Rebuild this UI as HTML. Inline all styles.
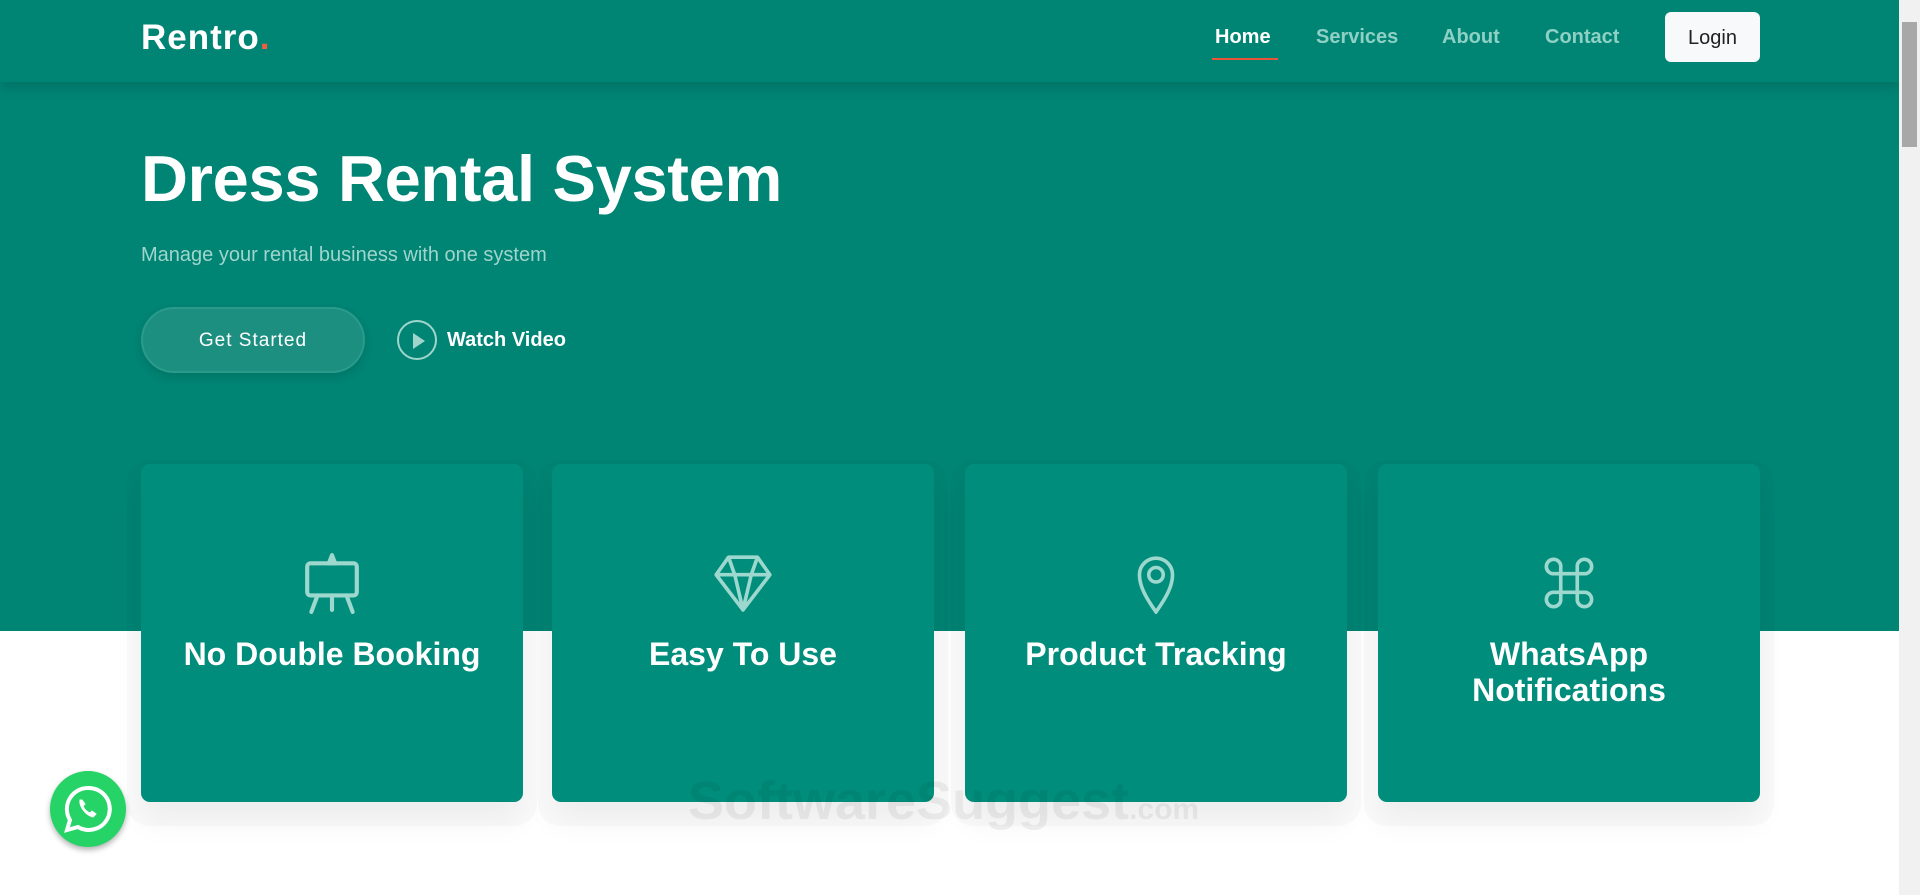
<!DOCTYPE html>
<html><head><meta charset="utf-8"><style>
*{margin:0;padding:0;box-sizing:border-box}
body{width:1920px;height:895px;overflow:hidden;background:#fff;font-family:"Liberation Sans",sans-serif;position:relative}
.hero{position:absolute;left:0;top:0;width:1899px;height:631px;background:#008575}
.nav{position:absolute;left:0;top:0;width:1899px;height:82px;background:#008575;box-shadow:0 6px 12px rgba(0,60,50,.25)}
.logo{position:absolute;left:141px;top:18px;font-size:35px;font-weight:bold;color:#fff;letter-spacing:1px}
.logo span{color:#f0603e}
.nl{position:absolute;top:26px;font-size:20px;font-weight:bold;color:#8fd0c5}
.login{position:absolute;left:1665px;top:12px;width:95px;height:50px;background:#f8f9fb;border-radius:6px;color:#222;font-size:20px;text-align:center;line-height:52px}
h1{position:absolute;left:141px;top:141px;font-size:65px;color:#fff;font-weight:bold;letter-spacing:-.3px}
.sub{position:absolute;left:141px;top:244px;font-size:20px;color:#9fd5cc}
.btn{position:absolute;left:141px;top:307px;width:224px;height:66px;border-radius:33px;background:#1d8f80;border:2px solid #2a9a8b;color:#fff;font-size:19px;letter-spacing:1px;text-align:center;line-height:64px;box-shadow:0 4px 10px rgba(0,50,40,.2)}
.play{position:absolute;left:397px;top:320px;width:40px;height:40px;border:2px solid #9fd5cc;border-radius:50%}
.play:after{content:"";position:absolute;left:14px;top:11px;border-left:12px solid #9fd5cc;border-top:8px solid transparent;border-bottom:8px solid transparent}
.wv{position:absolute;left:447px;top:329px;font-size:20px;font-weight:bold;color:#fff}
.card{position:absolute;top:464px;width:382px;height:338px;background:#018d7b;border-radius:9px;box-shadow:0 20px 30px rgba(0,0,0,.05),0 10px 0 14px rgba(0,0,0,.02);text-align:center;color:#fff}
.card svg{position:absolute;left:50%;top:88px;margin-left:-30px}
.card h3{position:absolute;left:0;right:0;top:172px;font-size:32px;line-height:36px;font-weight:bold}
.wa{position:absolute;left:50px;top:771px;width:76px;height:76px;border-radius:50%;background:#25d366;box-shadow:0 3px 6px rgba(0,0,0,.3)}
.wm{position:absolute;left:688px;top:770px;font-size:54px;font-weight:bold;color:rgba(0,0,0,.06)}
.sb{position:absolute;right:0;top:0;width:21px;height:895px;background:#f1f1f1}
.sb div{position:absolute;left:3px;top:22px;width:15px;height:125px;background:#a8a8a8}
</style></head><body>
<div class="hero"></div>
<div class="nav">
<div class="logo">Rentro<span>.</span></div>
<div class="nl" style="left:1215px;color:#fff">Home</div>
<div style="position:absolute;left:1212px;top:58px;width:66px;height:2px;background:#e8553a"></div>
<div class="nl" style="left:1316px">Services</div>
<div class="nl" style="left:1442px">About</div>
<div class="nl" style="left:1545px">Contact</div>
<div class="login">Login</div>
</div>
<h1>Dress Rental System</h1>
<div class="sub">Manage your rental business with one system</div>
<div class="btn">Get Started</div>
<div class="play"></div>
<div class="wv">Watch Video</div>

<div class="card" style="left:141px"><svg width="60" height="62" viewBox="0 0 58 60" fill="none" stroke="#9dd8cf" stroke-width="4" stroke-linecap="round" stroke-linejoin="round"><rect x="5" y="11" width="48" height="31" rx="3"/><path d="M29 3l-3 8h6z" fill="#9dd8cf"/><path d="M15 42l-6 16M29 42v14M43 42l6 16"/></svg><h3>No Double Booking</h3></div>
<div class="card" style="left:552px"><svg width="60" height="62" viewBox="0 0 58 60" fill="none" stroke="#9dd8cf" stroke-width="3.5" stroke-linejoin="round"><path d="M15 5h28l12 17-26 34L3 22z"/><path d="M3 22h52M15 5l6 17 8 34 8-34 6-17"/></svg><h3>Easy To Use</h3></div>
<div class="card" style="left:965px"><svg width="60" height="62" viewBox="0 0 58 60" fill="none" stroke="#9dd8cf" stroke-width="3.5"><path d="M29 58C19 44 13 33 13 22a16 16 0 0 1 32 0c0 11-6 22-16 36z"/><circle cx="29" cy="22" r="7"/></svg><h3>Product Tracking</h3></div>
<div class="card" style="left:1378px"><svg width="60" height="62" viewBox="0 0 58 60" fill="none" stroke="#9dd8cf" stroke-width="3.5"><path d="M21 21v18M37 21v18M21 21H13a7 7 0 1 1 8-8zM37 21h8a7 7 0 1 0-8-8zM21 21v-8M37 21v-8M21 21h16M21 39h16M21 39H13a7 7 0 1 0 8 8zM37 39h8a7 7 0 1 1-8 8zM21 39v8M37 39v8"/></svg><h3>WhatsApp<br>Notifications</h3></div>

<div class="wm">SoftwareSuggest<span style="font-size:30px">.com</span></div>
<div class="wa"><svg width="76" height="76" viewBox="0 0 76 76" fill="none" stroke="#fff" stroke-width="4"><path d="M38 17a21 21 0 1 1-10 39l-11 3 3-10a21 21 0 0 1 18-32z"/><path d="M30 29c-1 6 5 15 13 17l3-3-4-3-2 2c-3-1-6-4-7-7l2-2-3-4z" fill="#fff" stroke-width="1"/></svg></div>
<div class="sb"><div></div></div>
</body></html>
